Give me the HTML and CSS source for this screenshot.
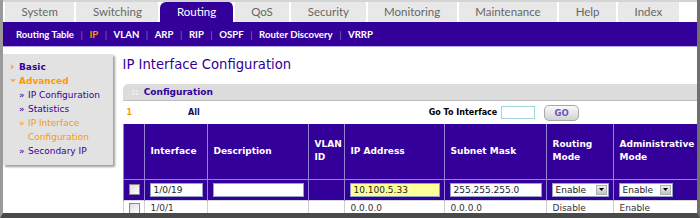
FILE: index.html
```html
<!DOCTYPE html>
<html>
	<head>
		<title>IP Interface Configuration</title>
		<meta charset="utf-8">
		<link rel="stylesheet" href="styles.css">
	</head>
	<body>
		<div class="frame">
			<ul class="tabs">
				<li>System</li>
				<li>Switching</li>
				<li class="active">Routing</li>
				<li>QoS</li>
				<li>Security</li>
				<li>Monitoring</li>
				<li>Maintenance</li>
				<li>Help</li>
				<li>Index</li>
			</ul>
			<div class="subnav">
				<span>Routing Table</span><span class="sep">|</span>
				<span class="current">IP</span><span class="sep">|</span>
				<span>VLAN</span><span class="sep">|</span>
				<span>ARP</span><span class="sep">|</span>
				<span>RIP</span><span class="sep">|</span>
				<span>OSPF</span><span class="sep">|</span>
				<span>Router Discovery</span><span class="sep">|</span>
				<span>VRRP</span>
			</div>

			<div class="content">
				<div class="sidebar">
					<div class="group"><span class="mark">&rsaquo;</span>Basic</div>
					<div class="group open"><span class="mark down">&rsaquo;</span>Advanced</div>
					<div class="item"><span class="bullet">&raquo;</span>IP Configuration</div>
					<div class="item"><span class="bullet">&raquo;</span>Statistics</div>
					<div class="item selected"><span class="bullet">&raquo;</span><span>IP Interface Configuration</span></div>
					<div class="item"><span class="bullet">&raquo;</span>Secondary IP</div>
				</div>

				<div class="main">
					<h1 class="title">IP Interface Configuration</h1>
					<div class="box">
						<div class="box-head"><span class="grip">::</span>Configuration</div>
						<div class="pager">
							<span class="page-num">1</span>
							<span class="page-all">All</span>
							<span class="goto-label">Go To Interface</span>
							<span class="goto-input"></span>
							<span class="go-btn">GO</span>
						</div>
						<table class="grid">
							<colgroup>
								<col style="width:21px">
								<col style="width:63px">
								<col style="width:101px">
								<col style="width:36px">
								<col style="width:100px">
								<col style="width:102px">
								<col style="width:67px">
								<col style="width:84px">
							</colgroup>
							<tr class="head">
								<th></th>
								<th>Interface</th>
								<th>Description</th>
								<th>VLAN<br>ID</th>
								<th>IP Address</th>
								<th>Subnet Mask</th>
								<th>Routing<br>Mode</th>
								<th>Administrative<br>Mode</th>
							</tr>
							<tr class="edit">
								<td><span class="check"></span></td>
								<td><span class="field">1/0/19</span></td>
								<td><span class="field"></span></td>
								<td></td>
								<td><span class="field hilite">10.100.5.33</span></td>
								<td><span class="field">255.255.255.0</span></td>
								<td><span class="select">Enable<span class="drop"><svg width="5" height="3" viewBox="0 0 5 3"><path d="M0 0H5L2.5 3Z" fill="#000"/></svg></span></span></td>
								<td><span class="select small">Enable<span class="drop"><svg width="5" height="3" viewBox="0 0 5 3"><path d="M0 0H5L2.5 3Z" fill="#000"/></svg></span></span></td>
							</tr>
							<tr class="row">
								<td><span class="check"></span></td>
								<td>1/0/1</td>
								<td></td>
								<td></td>
								<td>0.0.0.0</td>
								<td>0.0.0.0</td>
								<td>Disable</td>
								<td>Enable</td>
							</tr>
						</table>
					</div>
				</div>
			</div>
		</div>
	</body>
</html>
```

FILE: styles.css
```css
*{
	margin:0;
	padding:0;
	box-sizing:border-box;
}
body{
	font-family:"DejaVu Sans", Verdana, sans-serif;
	font-size:9px;
	background-color:#fff;
}
.frame{
	height:218px;
	overflow:hidden;
	border-left:3px solid #9a9a9a;
	border-right:3px solid #707070;
	border-bottom:5px solid #4a4a4a;
}

/* top tabs */
.tabs{
	display:flex;
	height:22px;
	list-style:none;
	border-top:2px solid #d4d4d4;
	padding-left:2px;
	font-family:Lato, sans-serif;
	font-size:11.5px;
	color:#666;
}
.tabs li{
	background-color:#e8e8e8;
	padding:0 16.5px;
	line-height:20px;
	text-align:center;
	border-right:2px solid #fff;
}
.tabs li.active{
	background-color:#330099;
	color:#fff;
	border-radius:6px 6px 0 0;
}

/* sub navigation */
.subnav{
	display:flex;
	align-items:center;
	height:25px;
	padding-left:13px;
	background-color:#330099;
	border-bottom:1px solid #b7a9ea;
	font-family:Lato, sans-serif;
	font-weight:bold;
	font-size:9.6px;
	color:#fff;
}
.subnav .sep{
	color:#8070c0;
	font-weight:normal;
	margin:0 6.5px;
}
.subnav .current{
	color:#ff9900;
}

.content{
	display:flex;
	align-items:flex-start;
}

/* left menu */
.sidebar{
	width:110px;
	margin-top:7px;
	padding:6px 0 7px;
	background-color:#e2e2e2;
	box-shadow:2px 2px 2px #a0a0a0;
	line-height:14px;
	color:#330099;
}
.sidebar .group{
	display:flex;
	padding-left:7px;
	font-weight:bold;
}
.sidebar .group.open{
	color:#ff9900;
}
.sidebar .mark{
	width:9px;
	color:#ff9900;
	font-weight:bold;
	font-size:11px;
}
.sidebar .mark.down{
	display:inline-block;
	transform:rotate(90deg);
	transform-origin:3px 7px;
}
.sidebar .item{
	display:flex;
	padding-left:16px;
}
.sidebar .bullet{
	width:9px;
	flex:none;
}
.sidebar .item.selected{
	color:#ff9900;
}

/* main area */
.main{
	flex:1;
	margin-left:10px;
}
.title{
	font-size:13.2px;
	font-weight:normal;
	color:#330099;
	line-height:16px;
	margin-top:10px;
	margin-bottom:11px;
}
.box-head{
	display:flex;
	align-items:center;
	height:17px;
	padding-left:9px;
	background-color:#dcdcdc;
	border-bottom:1px solid #bdbdbd;
	border-radius:5px 0 0 0;
	font-weight:bold;
	color:#330099;
}
.box-head .grip{
	color:#f4f4f4;
	margin-right:5px;
}
.pager{
	display:flex;
	align-items:center;
	height:23px;
	font-size:8px;
	font-weight:bold;
}
.page-num{
	margin-left:4px;
	color:#ff9900;
}
.page-all{
	margin-left:56px;
	color:#1a0a55;
}
.goto-label{
	margin-left:229px;
	color:#000;
}
.goto-input{
	width:34px;
	height:13px;
	margin-left:4px;
	border:1px solid #9fd6d6;
	background-color:#fff;
}
.go-btn{
	display:flex;
	align-items:center;
	justify-content:center;
	width:35px;
	height:16px;
	margin-left:9px;
	border:1px solid #a8a8a8;
	border-radius:5px;
	background:linear-gradient(#fafafa, #d2d2d2);
	color:#6a52b8;
	font-size:8.5px;
}

/* table */
.grid{
	width:574px;
	table-layout:fixed;
	border-collapse:collapse;
}
.grid th{
	height:55px;
	padding:0 2px 0 6px;
	background-color:#330099;
	border-left:1px solid #9384d4;
	color:#fff;
	font-weight:bold;
	text-align:left;
	vertical-align:middle;
	line-height:13px;
}
.grid td{
	padding:0 4px 0 5px;
	white-space:nowrap;
}
.edit td{
	height:21px;
	background-color:#330099;
	border-left:1px solid #9384d4;
	border-top:1px solid #9384d4;
}
.row td{
	height:16px;
	background-color:#fff;
	border-left:1px solid #d0d0d0;
	border-top:1px solid #d8d8d8;
	color:#333;
	padding-left:6px;
}
.check{
	display:block;
	width:11px;
	height:11px;
	border:1px solid #888;
	background:linear-gradient(135deg, #dcdcdc, #fff);
}
.row .check{
	margin-left:-1px;
}
.field{
	display:block;
	width:100%;
	height:14px;
	padding:0 3px;
	border:1px solid #8da4c4;
	background-color:#fff;
	line-height:12px;
	color:#222;
}
.field.hilite{
	background-color:#ffff99;
}
.select{
	display:flex;
	align-items:center;
	width:57px;
	height:14px;
	padding-left:3px;
	border:1px solid #8da4c4;
	background-color:#fff;
	color:#222;
}
.select.small{
	width:54px;
}
.select .drop{
	display:flex;
	align-items:center;
	justify-content:center;
	width:11px;
	height:10px;
	margin-left:auto;
	margin-right:1px;
	border:1px solid #b0b0b0;
	background:linear-gradient(#f0f0f0, #c4c4c4);
}
```
